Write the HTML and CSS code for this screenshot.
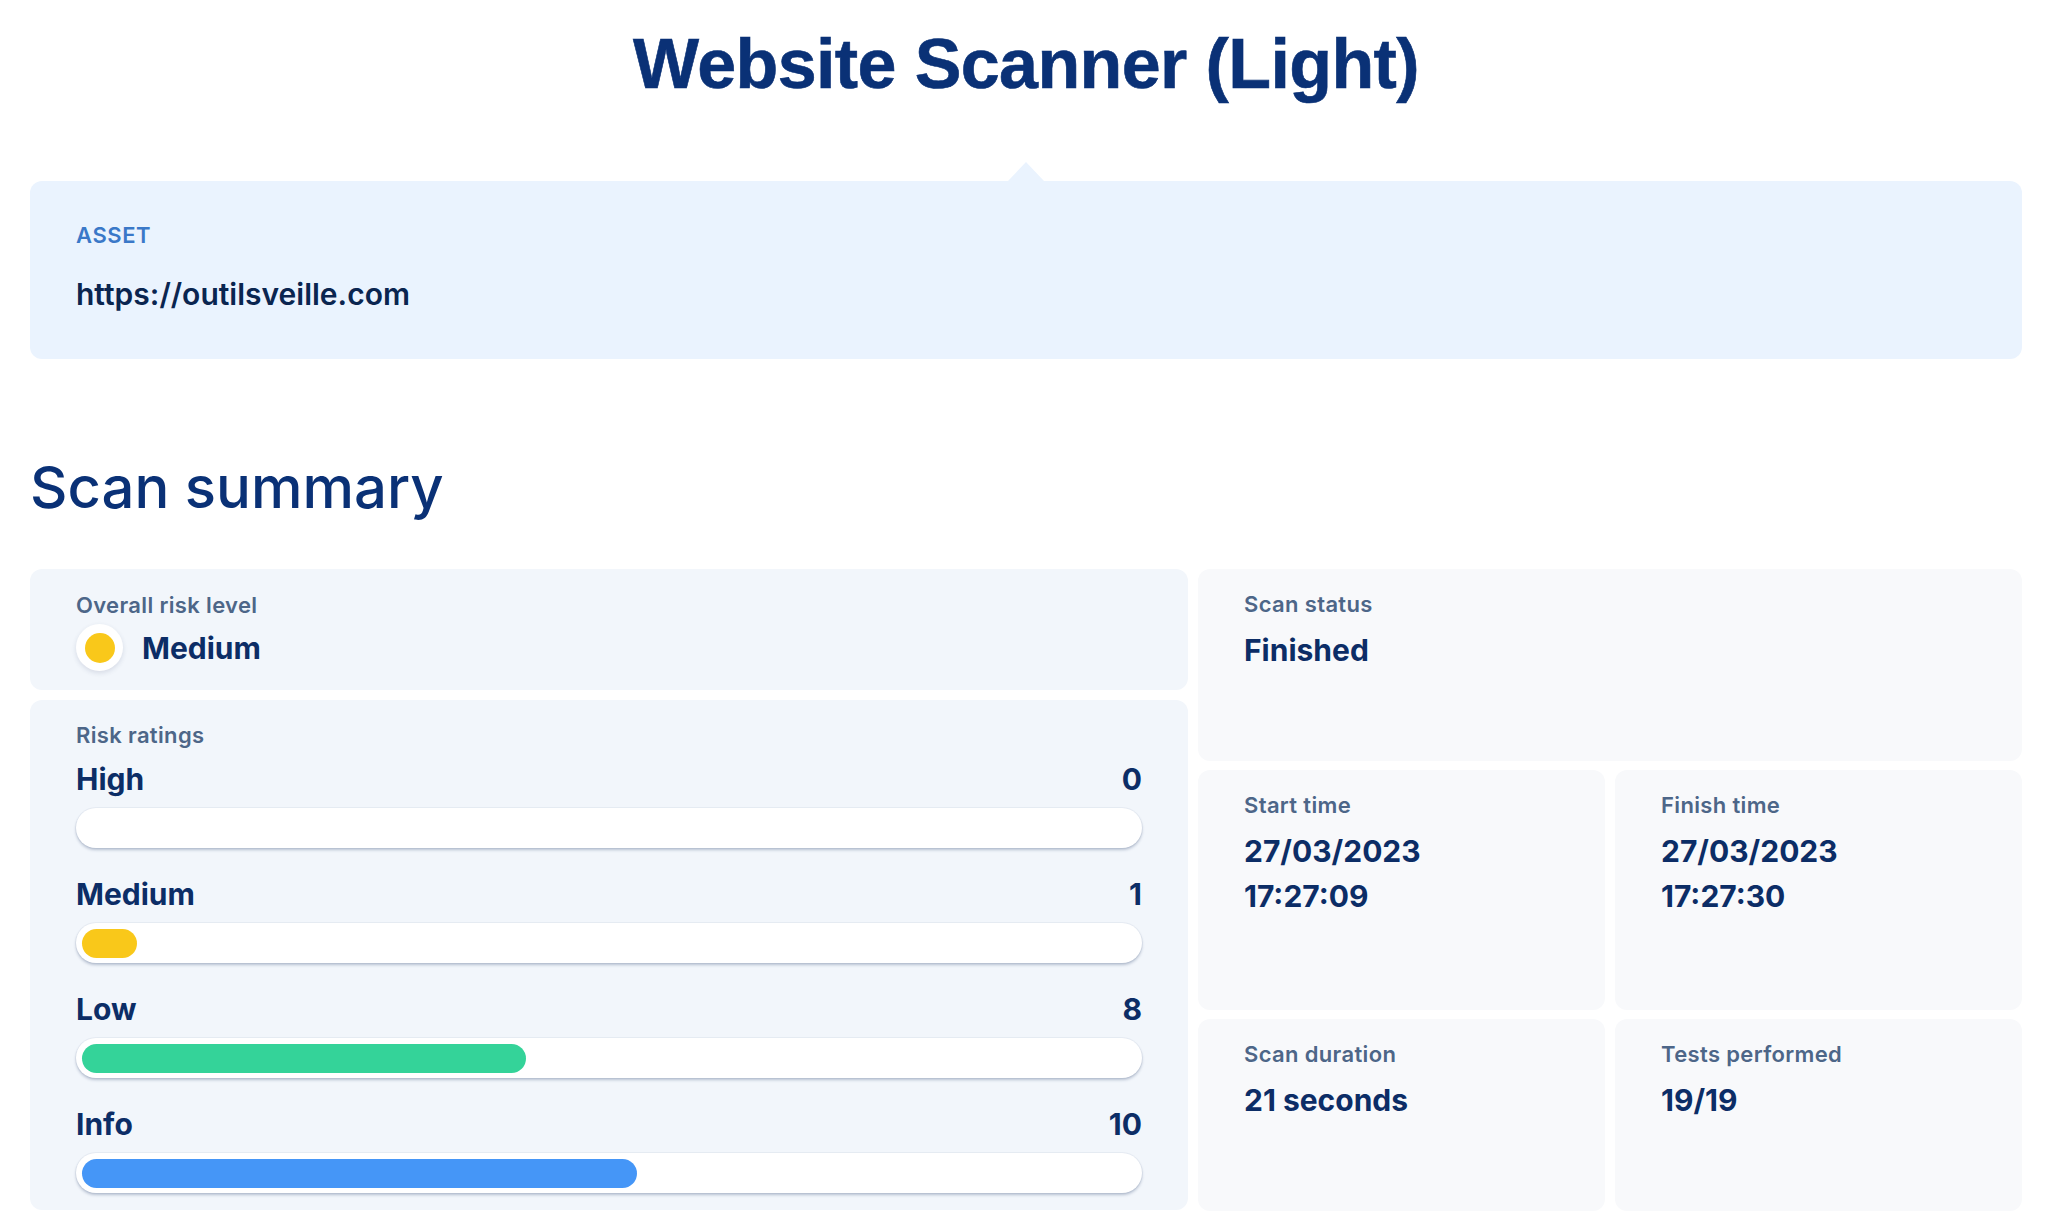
FILE: index.html
```html
<!DOCTYPE html>
<html lang="en">
<head>
<meta charset="utf-8">
<title>Website Scanner (Light)</title>
<link rel="stylesheet" href="styles.css">
</head>
<body>
<main class="page">
  <h1 class="title">Website Scanner (Light)</h1>

  <section class="asset">
    <span class="asset-notch"></span>
    <div class="asset-label">ASSET</div>
    <div class="asset-url">https://outilsveille.com</div>
  </section>

  <h2 class="section-title">Scan summary</h2>

  <div class="summary">
    <div class="summary-left">
      <div class="card card-blue card-overall">
        <div class="label">Overall risk level</div>
        <div class="overall-row">
          <span class="risk-dot"><span class="risk-dot-inner"></span></span>
          <span class="overall-value">Medium</span>
        </div>
      </div>

      <div class="card card-blue card-ratings">
        <div class="label">Risk ratings</div>
        <div class="ratings">
          <div class="rating">
            <div class="rating-head"><span>High</span><span>0</span></div>
            <div class="track"></div>
          </div>
          <div class="rating">
            <div class="rating-head"><span>Medium</span><span>1</span></div>
            <div class="track"><div class="fill fill-medium" style="width:5.263%"></div></div>
          </div>
          <div class="rating">
            <div class="rating-head"><span>Low</span><span>8</span></div>
            <div class="track"><div class="fill fill-low" style="width:42.105%"></div></div>
          </div>
          <div class="rating">
            <div class="rating-head"><span>Info</span><span>10</span></div>
            <div class="track"><div class="fill fill-info" style="width:52.632%"></div></div>
          </div>
        </div>
      </div>
    </div>

    <div class="summary-right">
      <div class="card card-gray card-status">
        <div class="label">Scan status</div>
        <div class="value">Finished</div>
      </div>
      <div class="card card-gray">
        <div class="label">Start time</div>
        <div class="value">27/03/2023<br>17:27:09</div>
      </div>
      <div class="card card-gray">
        <div class="label">Finish time</div>
        <div class="value">27/03/2023<br>17:27:30</div>
      </div>
      <div class="card card-gray">
        <div class="label">Scan duration</div>
        <div class="value">21 seconds</div>
      </div>
      <div class="card card-gray">
        <div class="label">Tests performed</div>
        <div class="value">19/19</div>
      </div>
    </div>
  </div>
</main>
</body>
</html>
```

FILE: styles.css
```css
* {
  box-sizing: border-box;
}

html, body {
  margin: 0;
  padding: 0;
  background: #ffffff;
}

body {
  font-family: Inter, "Noto Sans", sans-serif;
  color: #0c2d66;
  overflow: hidden;
}

.page {
  padding: 29px 26px 0 30px;
}

.title {
  margin: 0;
  font-family: "Liberation Sans", Arial, sans-serif;
  font-weight: 700;
  font-size: 70px;
  line-height: 70px;
  letter-spacing: -0.6px;
  color: #0a3176;
  text-align: center;
  -webkit-text-stroke: 0.6px #0a3176;
}

.asset {
  position: relative;
  margin-top: 82px;
  height: 178px;
  padding: 39px 46px 0 46px;
  background: #eaf3fe;
  border-radius: 12px;
}

.asset-notch {
  position: absolute;
  top: -19px;
  left: 50%;
  margin-left: -18px;
  width: 0;
  height: 0;
  border-left: 18px solid transparent;
  border-right: 18px solid transparent;
  border-bottom: 19px solid #eaf3fe;
}

.asset-label {
  font-size: 22px;
  line-height: 30px;
  font-weight: 600;
  color: #3a78c8;
  letter-spacing: 0.6px;
}

.asset-url {
  margin-top: 24px;
  font-size: 30px;
  line-height: 40px;
  font-weight: 600;
  color: #0a2550;
}

.section-title {
  margin: 94px 0 0 0;
  font-family: Inter, "Noto Sans", sans-serif;
  font-weight: 500;
  font-size: 58px;
  line-height: 68px;
  color: #0a3176;
}

.summary {
  margin-top: 48px;
  display: grid;
  grid-template-columns: 1158px 1fr;
  column-gap: 10px;
}

.summary-left {
  display: flex;
  flex-direction: column;
  gap: 10px;
}

.summary-right {
  display: grid;
  grid-template-columns: 1fr 1fr;
  grid-template-rows: 192px 240px 192px;
  gap: 9px 10px;
}

.card {
  border-radius: 12px;
  padding: 21px 46px 17px 46px;
}

.card-blue {
  background: #f2f6fb;
}

.card-gray {
  background: #f8f9fb;
}

.card-status {
  grid-column: 1 / span 2;
}

.label {
  font-size: 22px;
  line-height: 28px;
  font-weight: 600;
  letter-spacing: 0.35px;
  color: #4d6688;
}

.card-overall {
  height: 121px;
  padding-top: 22px;
}

.overall-row {
  margin-top: 5px;
  display: flex;
  align-items: center;
  gap: 19px;
}

.risk-dot {
  width: 47px;
  height: 47px;
  border-radius: 50%;
  background: #ffffff;
  box-shadow: 0 2px 5px rgba(40, 60, 100, 0.14);
  display: flex;
  align-items: center;
  justify-content: center;
}

.risk-dot-inner {
  width: 30px;
  height: 30px;
  border-radius: 50%;
  background: #f9c81a;
}

.overall-value {
  font-size: 30px;
  line-height: 36px;
  font-weight: 700;
  color: #0c2d66;
}

.ratings {
  margin-top: 12px;
  display: flex;
  flex-direction: column;
  gap: 28px;
}

.rating-head {
  display: flex;
  justify-content: space-between;
  font-size: 30px;
  line-height: 36px;
  font-weight: 700;
  color: #0c2d66;
}

.track {
  margin-top: 11px;
  height: 40px;
  padding: 5.5px 6px;
  background: #ffffff;
  border-radius: 20px;
  box-shadow: 0 2px 3px rgba(60, 80, 120, 0.32), 0 0 0 1px rgba(60, 80, 120, 0.05);
}

.fill {
  height: 29px;
  border-radius: 15px;
}

.fill-medium {
  background: #f9c81a;
}

.fill-low {
  background: #34d399;
}

.fill-info {
  background: #4596f7;
}

.value {
  margin-top: 10px;
  font-size: 30px;
  line-height: 45px;
  font-weight: 700;
  color: #0c2d66;
}
```
